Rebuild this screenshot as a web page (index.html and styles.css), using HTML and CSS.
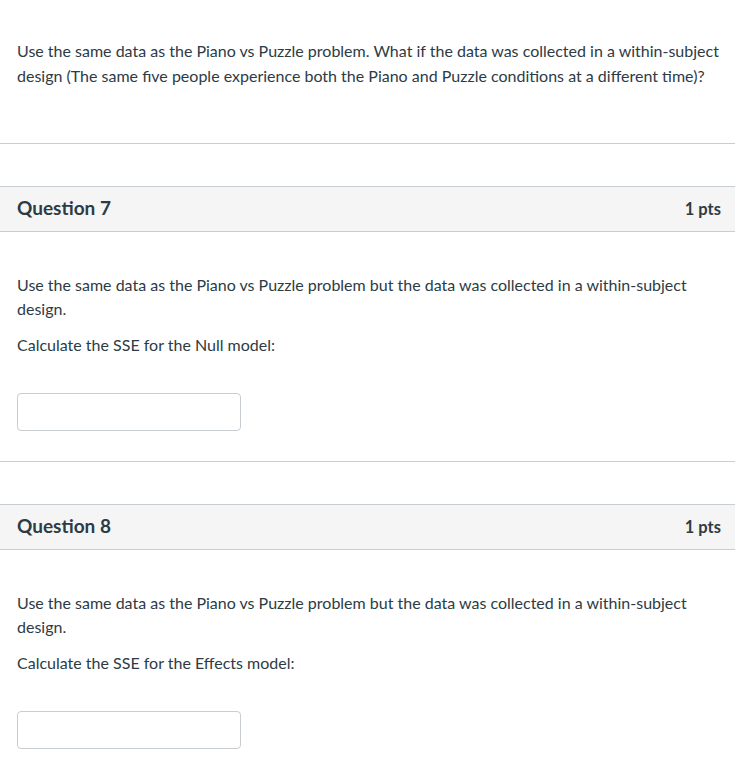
FILE: index.html
```html
<!DOCTYPE html>
<html>
<head>
<meta charset="utf-8">
<link rel="stylesheet" href="styles.css">
</head>
<body>
<div class="page">
  <div class="question first">
    <div class="q-body">
      <p>Use the same data as the Piano vs Puzzle problem. What if the data was collected in a within-subject design (The same five people experience both the Piano and Puzzle conditions at a different time)?</p>
    </div>
  </div>

  <div class="question">
    <div class="q-header">
      <span class="q-title">Question 7</span>
      <span class="q-pts">1 pts</span>
    </div>
    <div class="q-body">
      <p>Use the same data as the Piano vs Puzzle problem but the data was collected in a within-subject design.</p>
      <p>Calculate the SSE for the Null model:</p>
      <input class="answer" type="text">
    </div>
  </div>

  <div class="question">
    <div class="q-header">
      <span class="q-title">Question 8</span>
      <span class="q-pts">1 pts</span>
    </div>
    <div class="q-body">
      <p>Use the same data as the Piano vs Puzzle problem but the data was collected in a within-subject design.</p>
      <p>Calculate the SSE for the Effects model:</p>
      <input class="answer" type="text">
    </div>
  </div>
</div>
</body>
</html>
```

FILE: styles.css
```css
html, body {
  margin: 0;
  padding: 0;
  background: #ffffff;
}
body {
  font-family: Lato, "Liberation Sans", sans-serif;
  color: #2d3b45;
  font-size: 16px;
  line-height: 24px;
}
.page {
  display: flex;
  flex-direction: column;
  gap: 42px;
}
.question {
  border-bottom: 1px solid #c7cdd1;
}
.q-header {
  display: flex;
  justify-content: space-between;
  align-items: center;
  height: 44px;
  padding: 0 14px 0 17px;
  background: #f5f5f5;
  border-top: 1px solid #c7cdd1;
  border-bottom: 1px solid #c7cdd1;
}
.q-title {
  font-size: 19px;
  font-weight: bold;
  line-height: 24px;
  margin-top: -2px;
}
.q-pts {
  font-size: 16.5px;
  font-weight: bold;
  line-height: 24px;
}
.q-body {
  padding: 41px 17px 30px 17px;
}
.question.first .q-body {
  padding: 38px 16px 55px 17px;
}
.q-body p {
  margin: 0 0 12px 0;
}
.question.first .q-body p {
  margin: 0;
  line-height: 25px;
}
.answer {
  display: block;
  margin-top: 36px;
  width: 224px;
  height: 38px;
  box-sizing: border-box;
  border: 1px solid #c7cdd1;
  border-radius: 4px;
  background: #fff;
  padding: 0 8px;
  font: inherit;
}
```
